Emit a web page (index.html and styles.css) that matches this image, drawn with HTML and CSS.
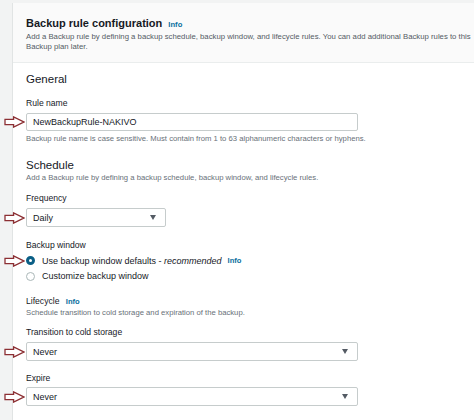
FILE: index.html
```html
<!DOCTYPE html>
<html lang="en">
<head>
    <meta charset="UTF-8">
    <meta name="viewport" content="width=device-width, initial-scale=1.0">
    <title>Backup rule configuration</title>
    <link rel="stylesheet" href="styles.css">
</head>
<body>
    <div class="page">
        <div class="panel">
            <div class="panel-head">
                <h2 class="panel-title">Backup rule configuration <a class="info">Info</a></h2>
                <p class="panel-desc">Add a Backup rule by defining a backup schedule, backup window, and lifecycle rules. You can add additional Backup rules to this Backup plan later.</p>
            </div>

            <div class="panel-body">
                <h3 class="section-title general">General</h3>

                <label class="field-label rule-label">Rule name</label>
                <div class="field">
                    <svg class="pointer" width="21" height="12" viewBox="0 0 21 12"><path d="M1 3.4H9.6V0.9L19.8 6L9.6 11.1V8.6H1Z"/></svg>
                    <div class="input wide">NewBackupRule-NAKIVO</div>
                </div>
                <p class="hint">Backup rule name is case sensitive. Must contain from 1 to 63 alphanumeric characters or hyphens.</p>

                <h3 class="section-title schedule">Schedule</h3>
                <p class="hint section-desc">Add a Backup rule by defining a backup schedule, backup window, and lifecycle rules.</p>

                <label class="field-label freq-label">Frequency</label>
                <div class="field">
                    <svg class="pointer" width="21" height="12" viewBox="0 0 21 12"><path d="M1 3.4H9.6V0.9L19.8 6L9.6 11.1V8.6H1Z"/></svg>
                    <div class="select narrow"><span>Daily</span><span class="caret"></span></div>
                </div>

                <label class="field-label window-label">Backup window</label>
                <div class="radios">
                    <div class="radio-row field">
                        <svg class="pointer" width="21" height="12" viewBox="0 0 21 12"><path d="M1 3.4H9.6V0.9L19.8 6L9.6 11.1V8.6H1Z"/></svg>
                        <span class="radio checked"></span>
                        <span>Use backup window defaults - <em>recommended</em></span>
                        <a class="info">Info</a>
                    </div>
                    <div class="radio-row">
                        <span class="radio"></span>
                        <span>Customize backup window</span>
                    </div>
                </div>

                <label class="field-label lifecycle-label">Lifecycle <a class="info">Info</a></label>
                <p class="hint section-desc lifecycle-desc">Schedule transition to cold storage and expiration of the backup.</p>

                <label class="field-label cold-label">Transition to cold storage</label>
                <div class="field">
                    <svg class="pointer" width="21" height="12" viewBox="0 0 21 12"><path d="M1 3.4H9.6V0.9L19.8 6L9.6 11.1V8.6H1Z"/></svg>
                    <div class="select wide"><span>Never</span><span class="caret"></span></div>
                </div>

                <label class="field-label expire-label">Expire</label>
                <div class="field expire-field">
                    <svg class="pointer" width="21" height="12" viewBox="0 0 21 12"><path d="M1 3.4H9.6V0.9L19.8 6L9.6 11.1V8.6H1Z"/></svg>
                    <div class="select wide"><span>Never</span><span class="caret"></span></div>
                </div>
            </div>
        </div>
    </div>
</body>
</html>
```

FILE: styles.css
```css
body {
    margin: 0;
    font-family: "Liberation Sans", Arial, sans-serif;
    color: #16191f;
    background-color: #f2f3f3;
}
.page {
    padding: 3px 0 0 12px;
    height: 417px;
    overflow: hidden;
}
.panel {
    background: white;
    border-left: 1px solid #e1e4e4;
    height: 100%;
}
.panel-head {
    background: #fafafa;
    padding: 13px 0 11px 13px;
    border-bottom: 1px solid #eaeded;
}
.panel-title {
    margin: 0;
    font-size: 11px;
    line-height: 14px;
    font-weight: bold;
}
.panel-title .info {
    margin-left: 3px;
}
.panel-desc {
    margin: 0;
    font-size: 7.75px;
    line-height: 9.5px;
    color: #545b64;
}
.info {
    color: #0a6f9e;
    font-weight: bold;
    font-size: 7.6px;
    margin-left: 4px;
}
.panel-body {
    padding: 0 13px;
}
.section-title {
    margin: 0;
    font-size: 11.5px;
    line-height: 14px;
    font-weight: normal;
}
.general { margin-top: 9px; }
.schedule { margin-top: 14px; }
.field-label {
    display: block;
    font-size: 8.6px;
    line-height: 12px;
}
.rule-label { margin-top: 11px; }
.freq-label { margin-top: 9px; }
.window-label { margin-top: 12px; }
.lifecycle-label { margin-top: 11px; }
.cold-label { margin-top: 8px; }
.expire-label { margin-top: 11px; }
.field {
    position: relative;
    margin-top: 4px;
}
.expire-field { margin-top: 3px; }
.pointer {
    position: absolute;
    left: -22px;
    top: 50%;
    margin-top: -6px;
    fill: white;
    stroke: #8c2f33;
    stroke-width: 1.3;
}
.input, .select {
    box-sizing: border-box;
    border: 1px solid #c6cccc;
    border-radius: 2px;
    background: white;
    font-size: 9px;
    padding: 0 6px;
}
.input {
    height: 18px;
    line-height: 16px;
}
.select {
    height: 19px;
    display: flex;
    align-items: center;
    justify-content: space-between;
    padding-right: 9px;
}
.wide { width: 332px; }
.narrow { width: 140px; }
.caret {
    width: 0;
    height: 0;
    border-left: 3.5px solid transparent;
    border-right: 3.5px solid transparent;
    border-top: 5px solid #545b64;
}
.hint {
    margin: 3px 0 0;
    font-size: 7.7px;
    line-height: 10px;
    color: #687078;
}
.section-desc { margin-top: 1px; }
.lifecycle-desc { margin-top: 0; }
.radios {
    margin-top: 2px;
}
.radio-row {
    display: flex;
    align-items: center;
    height: 15.5px;
    font-size: 9px;
    margin-top: 0;
}
.radio-row .info {
    margin-left: 6px;
}
.radio {
    box-sizing: border-box;
    width: 9px;
    height: 9px;
    border-radius: 50%;
    border: 1px solid #aab7b8;
    background: white;
    margin: 0 7px 0 0;
}
.radio.checked {
    border: 3px solid #0b5f86;
}
```
